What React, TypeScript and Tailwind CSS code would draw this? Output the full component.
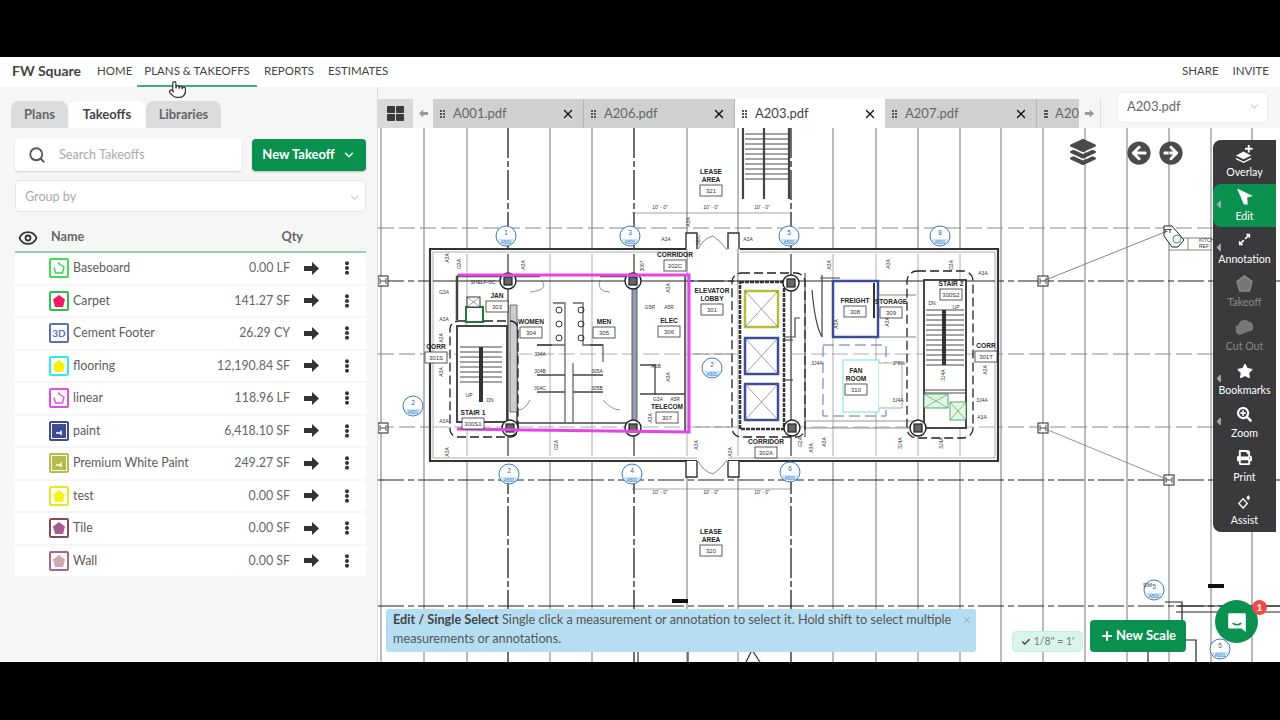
import { ChevronDown, Eye, Plus, Pointer, Search, X, Check } from "lucide-react";
import {
  FaArrowCircleLeft,
  FaArrowCircleRight,
  FaEllipsisV,
  FaExpandAlt,
  FaLayerGroup,
  FaPrint,
  FaSearchPlus,
  FaStar,
  FaThLarge,
  FaCaretLeft,
} from "react-icons/fa";

/* Rangées de la liste des métrés */
type Kind = "line" | "fill" | "3d" | "paint";
const takeoffs: { name: string; qty: string; kind: Kind; border: string; fill: string }[] = [
  { name: "Baseboard", qty: "0.00 LF", kind: "line", border: "#43dd55", fill: "#35d24a" },
  { name: "Carpet", qty: "141.27 SF", kind: "fill", border: "#2fc24a", fill: "#ee1c5e" },
  { name: "Cement Footer", qty: "26.29 CY", kind: "3d", border: "#5a6fc8", fill: "#5a6fc8" },
  { name: "flooring", qty: "12,190.84 SF", kind: "fill", border: "#2fe8f0", fill: "#f5ef12" },
  { name: "linear", qty: "118.96 LF", kind: "line", border: "#e24ee0", fill: "#e24ee0" },
  { name: "paint", qty: "6,418.10 SF", kind: "paint", border: "#3f4a94", fill: "#3f4a94" },
  { name: "Premium White Paint", qty: "249.27 SF", kind: "paint", border: "#b5bd4a", fill: "#b5bd4a" },
  { name: "test", qty: "0.00 SF", kind: "fill", border: "#e8e81e", fill: "#f7f31e" },
  { name: "Tile", qty: "0.00 SF", kind: "fill", border: "#8a4a55", fill: "#a0608c" },
  { name: "Wall", qty: "0.00 SF", kind: "fill", border: "#a06a85", fill: "#cfa7b0" },
];

function KindIcon({ kind, border, fill }: { kind: Kind; border: string; fill: string }) {
  return (
    <span
      className="flex size-[20px] shrink-0 items-center justify-center rounded-[2px] border-2 bg-white"
      style={{ borderColor: border }}
    >
      <svg viewBox="0 0 16 16" className="size-4">
        {kind === "fill" && <path d="M8 2 14 6.5 12 14H4L2 6.5Z" fill={fill} />}
        {kind === "line" && <path d="M7 2.5 9 4.5 13 7 11.5 13H4.5L3 7.5" fill="none" stroke={fill} strokeWidth="1.4" />}
        {kind === "3d" && (
          <text x="8" y="12" textAnchor="middle" fontSize="10" fontWeight="700" fill={fill}>
            3D
          </text>
        )}
        {kind === "paint" && (
          <>
            <rect x="1" y="1" width="14" height="14" fill={fill} />
            <path d="M5 10H10M10 7.5V12" stroke="#fff" strokeWidth="1.5" />
          </>
        )}
      </svg>
    </span>
  );
}

function BlockArrow({ className }: { className: string }) {
  return (
    <svg viewBox="0 0 15 15" className={className} fill="currentColor">
      <path d="M0 5H8V1L15 7.5 8 14V10H0Z" />
    </svg>
  );
}

function TakeoffRow({ t }: { t: (typeof takeoffs)[number] }) {
  return (
    <div className="flex h-[30.5px] items-center bg-white pl-[34px] pr-[12px]">
      <KindIcon kind={t.kind} border={t.border} fill={t.fill} />
      <span className="ml-[4px] flex-1 pt-[1px] text-[12.4px] text-[#5c5c5c]">{t.name}</span>
      <span className="pt-[1px] text-[12.4px] text-[#666]">{t.qty}</span>
      <BlockArrow className="ml-[14px] size-[15px] text-[#333]" />
      <FaEllipsisV className="ml-[21px] size-[14px] text-[#333]" />
    </div>
  );
}

function SideTab({ label, active, width }: { label: string; active?: boolean; width: string }) {
  return (
    <div
      className={`flex h-[27px] items-center justify-center rounded-t-lg text-[13px] font-bold ${width} ${
        active ? "bg-white text-[#444]" : "bg-[#dcdcdc] text-[#666]"
      }`}
    >
      {label}
    </div>
  );
}

function Sidebar() {
  return (
    <aside className="flex w-[378px] shrink-0 flex-col border-r border-[#ddd] bg-[#f6f6f6] pl-[4px]">
      <div className="flex gap-[1px] pl-[7px] pt-[14px]">
        <SideTab label="Plans" width="w-[57px]" />
        <SideTab label="Takeoffs" width="w-[76px]" active />
        <SideTab label="Libraries" width="w-[75px]" />
      </div>
      <div className="mt-[11px] flex gap-[10px] pl-[11px] pr-[11px]">
        <div className="flex h-[32px] w-[227px] items-center rounded bg-white pl-[13px] shadow-[0_1px_2px_rgba(0,0,0,0.15)]">
          <Search className="size-[18px] text-[#555]" strokeWidth={2.4} />
          <span className="ml-[13px] text-[12.6px] text-[#aaa]">Search Takeoffs</span>
        </div>
        <div className="flex h-[32px] w-[114px] items-center justify-center gap-[7px] rounded bg-[#0a914f] text-[13px] font-bold text-white shadow-[0_1px_2px_rgba(0,0,0,0.25)]">
          New Takeoff
          <ChevronDown className="size-[14px]" strokeWidth={2.5} />
        </div>
      </div>
      <div className="ml-[11px] mr-[11px] mt-[9px] flex h-[32px] items-center justify-between rounded border border-[#e4e4e4] bg-white pl-[9px] pr-[4px] pt-[2px] text-[12.6px] text-[#aaa]">
        Group by
        <ChevronDown className="size-[13px] text-[#ccc]" />
      </div>
      <div className="ml-[11px] mr-[11px] flex h-[41px] items-center border-b-2 border-[#93d3b0] pl-[3px] pt-[12px] text-[12.6px] font-bold text-[#666]">
        <Eye className="size-[20px] text-[#333]" strokeWidth={2.2} />
        <span className="ml-[13px] flex-1">Name</span>
        <span className="mr-[63px]">Qty</span>
      </div>
      <div className="ml-[11px] mr-[11px] flex flex-col gap-[2px]">
        {takeoffs.map((t) => (
          <TakeoffRow key={t.name} t={t} />
        ))}
      </div>
    </aside>
  );
}

function Grip() {
  return (
    <span className="mr-[8px] grid grid-cols-2 gap-[1px]">
      {[0, 1, 2, 3, 4, 5].map((i) => (
        <span key={i} className="size-[2px] bg-[#555]" />
      ))}
    </span>
  );
}

function PlanTab({ name, active, width }: { name: string; active?: boolean; width: string }) {
  return (
    <div
      className={`flex h-[29px] shrink-0 items-center pl-[7px] pr-[8px] text-[13px] ${width} ${
        active ? "bg-white text-[#444]" : "border-r border-[#b5b5b5] bg-[#d0d0d0] text-[#666]"
      }`}
    >
      <Grip />
      <span className="flex-1">{name}</span>
      <X className="size-[14px] text-[#111]" strokeWidth={2.4} />
    </div>
  );
}

function TabBar() {
  return (
    <div className="flex h-[41px] items-end bg-[#f6f6f6]">
      <div className="flex h-[29px] w-[35px] shrink-0 items-center justify-center bg-[#d9d9d9]">
        <FaThLarge className="size-[17px] text-[#3a3a3a]" />
      </div>
      <div className="flex h-[29px] w-[20px] shrink-0 items-center justify-center">
        <BlockArrow className="size-[9px] -scale-x-100 text-[#999]" />
      </div>
      <div className="flex w-[646px] shrink-0 overflow-hidden">
        <PlanTab name="A001.pdf" width="w-[151px]" />
        <PlanTab name="A206.pdf" width="w-[151px]" />
        <PlanTab name="A203.pdf" width="w-[150px]" active />
        <PlanTab name="A207.pdf" width="w-[152px]" />
        <div className="flex h-[29px] flex-1 items-center bg-[#d0d0d0] pl-[7px] text-[13px] text-[#666]">
          <Grip />
          A20
        </div>
      </div>
      <div className="flex h-[29px] w-[22px] shrink-0 items-center justify-center border-r border-[#ddd]">
        <BlockArrow className="size-[9px] text-[#999]" />
      </div>
      <div className="mb-[5px] ml-[16px] flex h-[31px] w-[151px] items-center justify-between rounded border border-[#eee] bg-white pb-[2px] pl-[9px] pr-[6px] text-[13px] text-[#666]">
        A203.pdf
        <ChevronDown className="size-[13px] text-[#ccc]" />
      </div>
    </div>
  );
}

/* Plan d'architecte : coordonnées en pixels de page */
const gridX = [381, 424, 467, 550, 592, 687, 738, 833, 876, 918, 960, 1001, 1043, 1085, 1127, 1169, 1211, 1252];
const bubbles: [number, number, string][] = [
  [506, 236, "1"], [630, 236, "3"], [789, 236, "5"], [940, 236, "8"],
  [509, 474, "2"], [632, 474, "4"], [790, 472, "6"], [712, 368, "2"],
  [413, 406, "2"], [1154, 590, "5"], [1220, 649, "5"],
];
const columns: [number, number][] = [[508, 281], [633, 281], [791, 283], [510, 428], [633, 428], [792, 428], [918, 428]];
const rooms: [string[], string, number, number][] = [
  [["LEASE", "AREA"], "321", 711, 174],
  [["CORRIDOR"], "302C", 675, 257],
  [["ELEVATOR", "LOBBY"], "301", 712, 293],
  [["JAN"], "303", 497, 298],
  [["WOMEN"], "304", 531, 324],
  [["MEN"], "305", 604, 324],
  [["ELEC"], "306", 669, 323],
  [["CORR"], "301S", 436, 349],
  [["TELECOM"], "307", 667, 409],
  [["STAIR 1"], "300S1", 473, 415],
  [["FREIGHT"], "308", 855, 303],
  [["STORAGE"], "309", 891, 304],
  [["FAN", "ROOM"], "310", 856, 373],
  [["STAIR 2"], "300S2", 951, 286],
  [["CORR"], "301T", 986, 348],
  [["CORRIDOR"], "302A", 766, 444],
  [["LEASE", "AREA"], "320", 711, 534],
];
const tags: [string, number, number][] = [
  ["G3A", 444, 294], ["A3A", 444, 321], ["A3A", 444, 423], ["G5R", 650, 309], ["A5R", 669, 309],
  ["A5B", 656, 368], ["G3A", 658, 401], ["A5R", 675, 401], ["A3A", 666, 241], ["A3A", 748, 241],
  ["3J4A", 817, 365], ["2*8%", 899, 365], ["3J4A", 898, 402], ["3J4A", 982, 402], ["A3A", 982, 419], ["A3A", 983, 275],
  ["SHELF-NC", 483, 284], ["304A", 540, 356], ["304B", 540, 373], ["304C", 540, 390], ["305A", 597, 373], ["305B", 597, 390],
  ["UP", 469, 397], ["DN", 490, 402], ["DN", 932, 305], ["UP", 956, 309],
];
const vtags: [string, number, number][] = [
  ["A3A", 449, 258], ["G3A", 461, 264], ["A3A", 525, 265], ["A3A", 690, 222], ["S8/C", 700, 240],
  ["3067", 644, 266], ["A3A", 443, 338], ["A3A", 443, 372], ["A3A", 449, 452], ["G2A", 558, 445],
  ["A3A", 670, 288], ["A3A", 670, 377], ["A3A", 652, 418], ["A3A", 698, 445], ["A3A", 831, 265],
  ["A3A", 890, 264], ["G3A", 953, 265], ["A3A", 838, 324], ["A3A", 889, 322], ["3J4A", 945, 375],
  ["A3A", 987, 370], ["G2A", 802, 442], ["A3A", 813, 448], ["A3A", 826, 442], ["3J4A", 902, 443],
  ["3J4A", 943, 443], ["A3A", 732, 452],
];
const dims: [number, number][] = [[660, 209], [711, 209], [762, 209], [660, 494], [711, 494], [762, 494]];

function Bubble({ x, y, label }: { x: number; y: number; label: string }) {
  return (
    <g>
      <circle cx={x} cy={y} r="10" fill="#fff" stroke="#3f78c8" strokeWidth="1" />
      <path d={`M${x - 9} ${y + 3}A10 10 0 0 0 ${x + 9} ${y + 3}Z`} fill="#c8e6f5" />
      <text x={x} y={y - 1} fontSize="6.5" textAnchor="middle" fill="#2f5f9f">{label}</text>
      <text x={x} y={y + 8} fontSize="4.5" textAnchor="middle" fill="#3f78c8">A501</text>
    </g>
  );
}

function Room({ lines, num, x, y }: { lines: string[]; num: string; x: number; y: number }) {
  return (
    <g>
      {lines.map((l, i) => (
        <text key={l} x={x} y={y + i * 8} fontSize="6.6" fontWeight="700" textAnchor="middle" fill="#222">{l}</text>
      ))}
      <rect x={x - 11} y={y + lines.length * 8 - 5} width="22" height="11" fill="#fff" stroke="#333" strokeWidth="0.8" />
      <text x={x} y={y + lines.length * 8 + 3} fontSize="6" textAnchor="middle" fill="#333">{num}</text>
    </g>
  );
}

function Elevator({ y, stroke }: { y: number; stroke: string }) {
  return (
    <g>
      <rect x="745" y={y} width="33" height="36" fill="#fff" stroke={stroke} strokeWidth="2.5" />
      <path d={`M745 ${y}L778 ${y + 36}M778 ${y}L745 ${y + 36}`} stroke="#777" strokeWidth="0.7" />
    </g>
  );
}

function Stairs({ x, y, w, h }: { x: number; y: number; w: number; h: number }) {
  const rungs = Array.from({ length: Math.floor(h / 5) }, (_, i) => y + i * 5);
  return (
    <g stroke="#333" strokeWidth="0.9">
      {rungs.map((ry) => (
        <path key={ry} d={`M${x} ${ry}H${x + w}`} />
      ))}
    </g>
  );
}

function PlanDrawing() {
  return (
    <svg viewBox="378 128 902 534" className="absolute inset-0 h-[534px] w-[902px]" fontFamily="'Liberation Sans', sans-serif">
      <rect x="378" y="128" width="902" height="534" fill="#fff" />
      {/* trame */}
      {gridX.map((x) => (
        <path key={x} d={`M${x} 128V662`} stroke="#777" strokeWidth="1" />
      ))}
      {[508, 634, 791].map((x) => (
        <path key={x} d={`M${x} 128V662`} stroke="#333" strokeWidth="1.4" strokeDasharray="30 3 6 3" />
      ))}
      <path d="M378 228H1280M378 354H1280M378 427H1280" stroke="#888" strokeWidth="1" strokeDasharray="16 5" fill="none" />
      <path d="M378 281H1280M378 480H1280M378 606H1280" stroke="#222" strokeWidth="1.1" strokeDasharray="26 4 6 4" fill="none" />

      {/* escalier du haut, hors plan */}
      <rect x="743" y="132" width="46" height="58" fill="#fff" />
      <Stairs x={745} y={134} w={43} h={52} />
      <path d="M743 128V199M764 128V199M789 128V199" stroke="#444" strokeWidth="2.2" />
      <path d="M632 213H792M632 489H792" stroke="#666" strokeWidth="0.6" />
      {dims.map(([x, y]) => (
        <text key={`${x}-${y}`} x={x} y={y} fontSize="5" textAnchor="middle" fill="#333">10' - 0"</text>
      ))}

      {/* enveloppe du bâtiment */}
      <path d="M686 249H430V461H697M740 249H998V461H728" fill="#fff" stroke="#333" strokeWidth="2.2" />
      <path d="M686 252H433V458H697M740 252H995V458H728" fill="none" stroke="#999" strokeWidth="0.8" />
      {gridX.filter((x) => x > 430 && x < 998).map((x) => (
        <path key={x} d={`M${x} 254V456`} stroke="#9a9a9a" strokeWidth="0.8" />
      ))}
      {[508, 634, 791].map((x) => (
        <path key={x} d={`M${x} 254V456`} stroke="#333" strokeWidth="1.2" />
      ))}
      <path d="M433 281H995" stroke="#222" strokeWidth="1" />
      <path d="M433 354H995M433 427H995" stroke="#999" strokeWidth="0.8" strokeDasharray="16 5" />

      {/* portes du haut et du bas */}
      <path d="M686 249V233H697V249M728 249V233H739V249" fill="#fff" stroke="#333" strokeWidth="1.4" />
      <path d="M698 249Q704 238 713 236Q720 240 727 250" fill="none" stroke="#555" strokeWidth="0.7" />
      <path d="M686 461V477H697V461M728 461V477H739V461" fill="#fff" stroke="#333" strokeWidth="1.4" />
      <path d="M698 461Q704 472 713 474Q720 470 727 460" fill="none" stroke="#555" strokeWidth="0.7" />

      {/* aile gauche : sanitaires */}
      <path d="M457 276H540M600 276H636M457 276V320" fill="none" stroke="#444" strokeWidth="2.5" />
      <path d="M517 322V423H634" fill="none" stroke="#444" strokeWidth="1.6" />
      <rect x="632" y="282" width="5" height="146" fill="#8f9fb8" stroke="#444" strokeWidth="0.8" />
      <path d="M685 276V432" stroke="#444" strokeWidth="1.6" />
      <path d="M510 305H517V412H510Z" fill="#ccc" stroke="#444" strokeWidth="0.7" />
      <path d="M553 303H565V345H537M573 303H583V345H603V362M565 345V423M573 363V423" fill="none" stroke="#666" strokeWidth="1.3" />
      <path d="M537 345H552M590 345H603M537 375H565M573 375H603M537 392H565M573 392H603" fill="none" stroke="#444" strokeWidth="1.6" />
      <circle cx="559" cy="310" r="3" fill="none" stroke="#333" />
      <circle cx="559" cy="324" r="3" fill="none" stroke="#333" />
      <circle cx="559" cy="338" r="3" fill="none" stroke="#333" />
      <circle cx="581" cy="310" r="3" fill="none" stroke="#333" />
      <circle cx="581" cy="324" r="3" fill="none" stroke="#333" />
      <circle cx="581" cy="338" r="3" fill="none" stroke="#333" />
      <path d="M541 280Q550 290 530 292M600 280Q596 292 610 292M530 400Q525 410 518 410M603 400Q612 410 620 410" fill="none" stroke="#666" strokeWidth="0.7" />
      <path d="M640 365H655V395M640 394H685" fill="none" stroke="#444" strokeWidth="1.3" />

      {/* escalier 1 */}
      <rect x="450" y="321" width="68" height="116" rx="8" fill="none" stroke="#222" strokeWidth="1.3" strokeDasharray="9 4" />
      <rect x="457" y="326" width="50" height="96" fill="#fff" stroke="#333" strokeWidth="1.8" />
      <Stairs x={460} y={347} w={42} h={42} />
      <rect x="479" y="347" width="4" height="55" fill="#333" />
      <rect x="466" y="307" width="17" height="15" fill="#fff" stroke="#1a7a3a" strokeWidth="2" />
      <rect x="467" y="297" width="13" height="10" fill="#fff" stroke="#333" />
      <path d="M467 297L480 307M480 297L467 307" stroke="#555" strokeWidth="0.6" />

      {/* noyau ascenseurs */}
      <rect x="732" y="273" width="73" height="164" rx="9" fill="none" stroke="#222" strokeWidth="1.3" strokeDasharray="9 4" />
      <rect x="740" y="282" width="44" height="147" fill="#fff" stroke="#333" strokeWidth="2.5" strokeDasharray="4 1" />
      <Elevator y={291} stroke="#b5bd3a" />
      <Elevator y={338} stroke="#3f4c9a" />
      <Elevator y={384} stroke="#3f4c9a" />
      <path d="M785 340H793M785 380H793M805 273V437" stroke="#333" strokeWidth="1" />
      <path d="M784 337H795V318H800M822 275V337M820 278H840M812 290Q815 325 822 337" fill="none" stroke="#444" strokeWidth="1.2" />

      {/* local technique */}
      <rect x="833" y="281" width="45" height="56" fill="#fff" stroke="#3f4c9a" strokeWidth="2.5" />
      <path d="M874 283V318" stroke="#333" strokeWidth="2" />
      <path d="M878 295H916M878 337H916" stroke="#666" strokeWidth="0.8" />
      <rect x="823" y="345" width="63" height="71" fill="none" stroke="#5a6fc8" strokeWidth="1" strokeDasharray="11 5" />
      <rect x="843" y="360" width="36" height="52" fill="#fff" stroke="#8ce8e0" strokeWidth="1.2" />
      <path d="M879 363H902V408H879" fill="#fff" stroke="#888" strokeWidth="0.7" />
      <path d="M806 428H916M806 421H916" stroke="#777" strokeWidth="0.8" />

      {/* escalier 2 */}
      <rect x="907" y="271" width="66" height="167" rx="10" fill="none" stroke="#222" strokeWidth="1.3" strokeDasharray="9 4" />
      <rect x="924" y="280" width="42" height="148" fill="#fff" stroke="#333" strokeWidth="1.8" />
      <Stairs x={926} y={310} w={38} h={60} />
      <rect x="942" y="310" width="4" height="55" fill="#333" />
      <path d="M924 390H966M924 393H966" stroke="#333" strokeWidth="0.9" />
      <rect x="924" y="394" width="24" height="14" fill="#e5f6e7" stroke="#2f9a4a" strokeWidth="0.8" />
      <rect x="950" y="402" width="16" height="18" fill="#e5f6e7" stroke="#2f9a4a" strokeWidth="0.8" />
      <path d="M924 394L948 408M948 394L924 408M950 402L966 420M966 402L950 420" stroke="#2f9a4a" strokeWidth="0.6" />

      {/* poteaux */}
      {columns.map(([x, y]) => (
        <g key={`${x}-${y}`}>
          <circle cx={x} cy={y} r="8" fill="#fff" stroke="#222" strokeWidth="1.4" />
          <rect x={x - 4} y={y - 4} width="8" height="8" fill="#666" stroke="#222" strokeWidth="1.2" />
        </g>
      ))}

      {/* polygone de métré */}
      <path d="M458 275H689V432L457 429" fill="none" stroke="#e545e8" strokeWidth="3" />

      {bubbles.map(([x, y, l]) => (
        <Bubble key={`${x}-${y}`} x={x} y={y} label={l} />
      ))}
      {rooms.map(([lines, num, x, y]) => (
        <Room key={`${num}-${x}`} lines={lines} num={num} x={x} y={y} />
      ))}
      {tags.map(([t, x, y]) => (
        <text key={`${t}-${x}-${y}`} x={x} y={y} fontSize="5" textAnchor="middle" fill="#333">{t}</text>
      ))}
      {vtags.map(([t, x, y]) => (
        <text key={`${t}-${x}-${y}`} x={x} y={y} fontSize="5" textAnchor="middle" fill="#333" transform={`rotate(-90 ${x} ${y})`}>{t}</text>
      ))}

      {/* repères latéraux */}
      {[[383, 281], [383, 428], [1043, 281], [1043, 428], [1169, 480]].map(([x, y]) => (
        <g key={`${x}-${y}`}>
          <rect x={x - 5} y={y - 5} width="10" height="10" fill="#fff" stroke="#222" />
          <path d={`M${x - 3} ${y - 3}V${y + 3}M${x + 3} ${y - 3}V${y + 3}M${x - 3} ${y}H${x + 3}`} stroke="#222" strokeWidth="0.8" />
        </g>
      ))}
      <path d="M1043 281L1165 232" stroke="#666" strokeWidth="0.8" />
      <path d="M1043 428L1169 480" stroke="#777" strokeWidth="0.8" />
      <path d="M1164 226H1172L1184 240L1178 247H1172L1164 236Z" fill="#fff" stroke="#222" />
      <text x="1168" y="233" fontSize="6" fontWeight="700" textAnchor="middle" fill="#222">FT</text>
      <circle cx="1177" cy="239" r="4" fill="none" stroke="#2f9a8a" />
      <path d="M1169 250H1212M1183 238H1212M1188 238V250" stroke="#555" strokeWidth="0.7" fill="none" />
      <text x="1199" y="242" fontSize="5" fill="#333">KITCH</text>
      <text x="1199" y="248" fontSize="5" fill="#333">REF</text>

      {/* bas du plan */}
      <rect x="672" y="599" width="16" height="4" fill="#111" />
      <rect x="1208" y="584" width="16" height="4" fill="#111" />
      <path d="M638 662V647H652M688 662V647H702M746 662L752 650L760 662" fill="none" stroke="#333" strokeWidth="1.2" />
      <path d="M1165 602H1182V622M1176 606H1280M1176 612H1280M1170 640H1196V662M1148 662V648H1168" fill="none" stroke="#222" strokeWidth="1.2" />
      <text x="1143" y="587" fontSize="5" fill="#333">SIM</text>
    </svg>
  );
}

function ToolItem({
  label,
  icon,
  active,
  muted,
  caret,
  height,
}: {
  label: string;
  icon: React.ReactNode;
  active?: boolean;
  muted?: boolean;
  caret?: boolean;
  height: string;
}) {
  return (
    <div
      className={`relative flex flex-col items-center justify-center gap-[2px] text-[10.6px] ${height} ${
        active ? "rounded-l-lg bg-[#0a914f]" : ""
      } ${muted ? "text-[#8a8a8a]" : "text-white"}`}
    >
      {caret && <FaCaretLeft className="absolute left-[-1px] top-[14px] size-[13px] text-[#aaa]" />}
      <span className="flex h-[20px] items-center">{icon}</span>
      {label}
    </div>
  );
}

function Toolbar() {
  return (
    <div className="absolute right-[4px] top-[12px] flex h-[392px] w-[63px] flex-col rounded-l-lg bg-[#3a3a3c]">
      <ToolItem
        height="h-[44px]"
        label="Overlay"
        icon={
          <svg viewBox="0 0 20 20" className="size-[19px]" fill="#fff">
            <path d="M9 8 17 12 9 16 1 12Z" />
            <path d="M1 14.5 9 18.5 17 14.5 17 16 9 20 1 16Z" />
            <path d="M13.5 1H15.5V4H18.5V6H15.5V9H13.5V6H10.5V4H13.5Z" />
          </svg>
        }
      />
      <ToolItem
        height="h-[43px]"
        label="Edit"
        active
        caret
        icon={
          <svg viewBox="0 0 16 16" className="size-[17px]" fill="#fff">
            <path d="M1 .5 16 7.5 10.5 9 11 15.5H7.5L5.5 11Z" />
          </svg>
        }
      />
      <ToolItem height="h-[43px]" label="Annotation" caret icon={<FaExpandAlt className="size-[13px]" />} />
      <ToolItem
        height="h-[44px]"
        label="Takeoff"
        muted
        icon={
          <svg viewBox="0 0 20 20" className="size-[19px]" fill="#777" stroke="#8a8a8a" strokeWidth="1.5">
            <path d="M10 2 18 8 15 18H5L2 8Z" />
          </svg>
        }
      />
      <ToolItem
        height="h-[44px]"
        label="Cut Out"
        muted
        icon={
          <svg viewBox="0 0 22 20" className="h-[19px] w-[21px]" fill="#777">
            <path d="M8 3Q13 0 15 4Q20 4 20 9Q21 14 16 14L6 18Q1 16 2 12Q0 8 5 7Q5 4 8 3Z" />
          </svg>
        }
      />
      <ToolItem height="h-[43px]" label="Bookmarks" caret icon={<FaStar className="size-[16px]" />} />
      <ToolItem height="h-[44px]" label="Zoom" caret icon={<FaSearchPlus className="size-[15px]" />} />
      <ToolItem height="h-[43px]" label="Print" icon={<FaPrint className="size-[15px]" />} />
      <ToolItem
        height="h-[44px]"
        label="Assist"
        icon={
          <svg viewBox="0 0 16 16" className="size-[15px]" fill="none" stroke="#fff" strokeWidth="1.4">
            <path d="M6.5 5 11 10 6.5 15 2 10Z" />
            <path d="M12 1 14 4 12 7 10 4Z" fill="#fff" stroke="none" />
          </svg>
        }
      />
    </div>
  );
}

function Canvas() {
  return (
    <div className="relative flex-1 overflow-hidden">
      <PlanDrawing />
      <FaLayerGroup className="absolute left-[692px] top-[11px] size-[26px] text-[#4a4a4a]" />
      <FaArrowCircleLeft className="absolute left-[749px] top-[13px] size-[24px] text-[#4a4a4a]" />
      <FaArrowCircleRight className="absolute left-[781px] top-[13px] size-[24px] text-[#4a4a4a]" />
      <Toolbar />
      {/* bandeau d'aide */}
      <div className="absolute left-[8px] top-[481px] flex h-[43px] w-[590px] rounded-[3px] bg-[#b6def3] pl-[7px] pr-[4px] pt-[1px] text-[12.7px] text-[#555]">
        <p className="flex-1 pr-[8px] leading-[19px]">
          <b className="text-[#444]">Edit / Single Select</b> Single click a measurement or annotation to select it. Hold shift to select multiple measurements or annotations.
        </p>
        <X className="mt-[5px] size-[10px] text-[#9ab]" strokeWidth={2.5} />
      </div>
      <div className="absolute left-[634px] top-[503px] flex h-[21px] w-[71px] items-center justify-center gap-[3px] rounded border border-[#c5eedd] bg-[#d8f5ea] text-[10.5px] text-[#778]">
        <Check className="size-[10px] text-[#333]" strokeWidth={3} />
        1/8" = 1'
      </div>
      <div className="absolute left-[712px] top-[492px] flex h-[32px] w-[96px] items-center justify-center gap-[2px] rounded bg-[#0a914f] text-[13px] font-bold text-white">
        <Plus className="size-[14px]" strokeWidth={3.5} />
        New Scale
      </div>
      <div className="absolute left-[837px] top-[472px] flex size-[43px] items-center justify-center rounded-full bg-[#0a914f]">
        <svg viewBox="0 0 20 20" className="size-[22px]">
          <path d="M3 2H17A1 1 0 0 1 18 3V19L14 16H3A1 1 0 0 1 2 15V3A1 1 0 0 1 3 2Z" fill="#fff" />
          <path d="M6 11Q10 14 14 11" fill="none" stroke="#0a914f" strokeWidth="1.5" />
        </svg>
      </div>
      <div className="absolute left-[874px] top-[472px] flex size-[15px] items-center justify-center rounded-full bg-[#f04a4a] text-[10px] font-bold text-white">
        1
      </div>
    </div>
  );
}

export default function App() {
  return (
    <div className="flex h-[720px] w-[1280px] flex-col overflow-hidden bg-black font-['Lato',sans-serif]">
      <div className="h-[57px] shrink-0 bg-black" />
      {/* barre de navigation */}
      <header className="relative flex h-[30px] shrink-0 items-center bg-white pl-[12px] pr-[11px] text-[11.5px] text-[#444]">
        <span className="-mt-[4px] w-[85px] text-[14px] font-bold text-[#444]">FW Square</span>
        <span className="-mt-[2px] w-[40px]">HOME</span>
        <span className="flex h-full w-[120px] items-center justify-center border-b-2 border-[#3fae7a] pb-[1px]">PLANS &amp; TAKEOFFS</span>
        <span className="-mt-[2px] ml-[7px] w-[64px]">REPORTS</span>
        <span className="-mt-[2px]">ESTIMATES</span>
        <span className="-mt-[2px] ml-auto">SHARE</span>
        <span className="-mt-[2px] ml-[14px]">INVITE</span>
        <Pointer className="absolute left-[168px] top-[23px] size-[19px] fill-white text-[#333]" strokeWidth={1.5} />
      </header>
      <div className="flex h-[575px] shrink-0">
        <Sidebar />
        <main className="flex min-w-0 flex-1 flex-col">
          <TabBar />
          <Canvas />
        </main>
      </div>
    </div>
  );
}
